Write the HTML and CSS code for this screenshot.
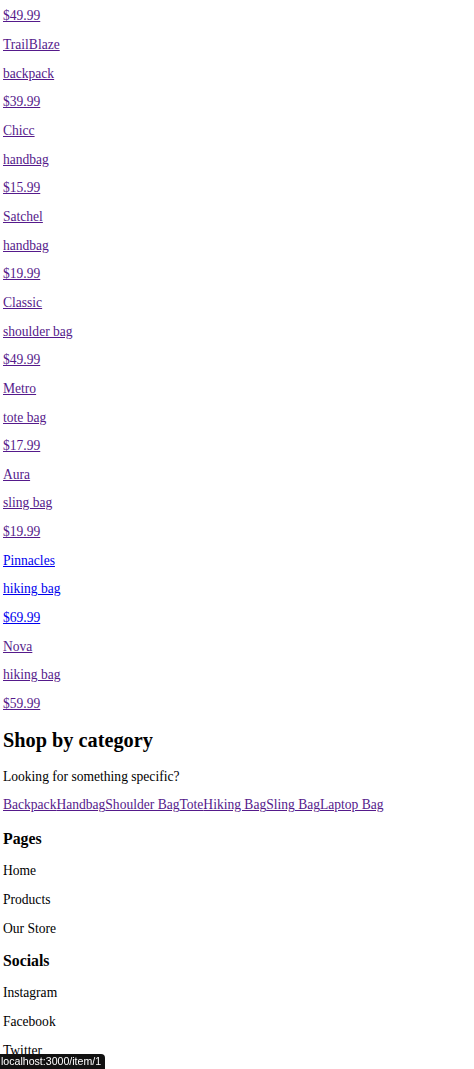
FILE: index.html
```html
<!DOCTYPE html>
<html lang="en">
<head>
<meta charset="utf-8">
<title>Shop</title>
<link rel="stylesheet" href="styles.css">
</head>
<body>
<main class="page">
  <section class="items">
    <p><a class="visited" href="#">$49.99</a></p>
    <p><a class="visited" href="#">TrailBlaze</a></p>
    <p><a class="visited" href="#">backpack</a></p>
    <p><a class="visited" href="#">$39.99</a></p>
    <p><a class="visited" href="#">Chicc</a></p>
    <p><a class="visited" href="#">handbag</a></p>
    <p><a class="visited" href="#">$15.99</a></p>
    <p><a class="visited" href="#">Satchel</a></p>
    <p><a class="visited" href="#">handbag</a></p>
    <p><a class="visited" href="#">$19.99</a></p>
    <p><a class="visited" href="#">Classic</a></p>
    <p><a class="visited" href="#">shoulder bag</a></p>
    <p><a class="visited" href="#">$49.99</a></p>
    <p><a class="visited" href="#">Metro</a></p>
    <p><a class="visited" href="#">tote bag</a></p>
    <p><a class="visited" href="#">$17.99</a></p>
    <p><a class="visited" href="#">Aura</a></p>
    <p><a class="visited" href="#">sling bag</a></p>
    <p><a class="visited" href="#">$19.99</a></p>
    <p><a class="fresh" href="#">Pinnacles</a></p>
    <p><a class="fresh" href="#">hiking bag</a></p>
    <p><a class="fresh" href="#">$69.99</a></p>
    <p><a class="visited" href="#">Nova</a></p>
    <p><a class="visited" href="#">hiking bag</a></p>
    <p><a class="visited" href="#">$59.99</a></p>
  </section>
  <section class="categories">
    <h2>Shop by category</h2>
    <p>Looking for something specific?</p>
    <p><a class="visited" href="#">Backpack</a><a class="visited" href="#">Handbag</a><a class="visited" href="#">Shoulder Bag</a><a class="visited" href="#">Tote</a><a class="visited" href="#">Hiking Bag</a><a class="visited" href="#">Sling Bag</a><a class="visited" href="#">Laptop Bag</a></p>
  </section>
  <footer class="footer">
    <h3>Pages</h3>
    <p>Home</p>
    <p>Products</p>
    <p>Our Store</p>
    <h3>Socials</h3>
    <p>Instagram</p>
    <p>Facebook</p>
    <p>Twitter</p>
  </footer>
</main>
<div class="status">localhost:3000/item/1</div>
</body>
</html>
```

FILE: styles.css
```css
html, body {
  margin: 0;
  padding: 0;
  background: #ffffff;
}

body {
  font-family: "Liberation Serif", "Times New Roman", serif;
  font-size: 13.55px;
  color: #000000;
}

.page {
  padding: 0 3px;
  margin-top: -5px;
}

.page p {
  margin: 13.33px 0;
  line-height: 15.33px;
}

.page h2 {
  font-size: 20.3px;
  line-height: 23px;
  margin: 17.8px 0 16.6px;
  font-weight: bold;
}

.page h3 {
  font-size: 15.8px;
  line-height: 18px;
  margin: 15.6px 0;
  font-weight: bold;
}

.footer {
  margin-top: 17.1px;
}

a {
  text-decoration: underline;
}

a.visited {
  color: #551a8b;
}

a.fresh {
  color: #0000ee;
}

.status {
  position: fixed;
  left: 0;
  bottom: 0;
  height: 15px;
  padding: 0 4px 0 1px;
  background: #111111;
  color: #ffffff;
  font-family: "Liberation Sans", Arial, sans-serif;
  font-size: 10.6px;
  line-height: 15px;
  border-top-right-radius: 4px;
  white-space: nowrap;
}
```
